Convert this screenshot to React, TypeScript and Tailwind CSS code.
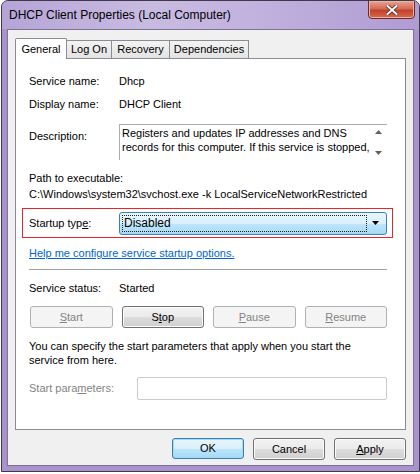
import React from 'react';

const font = "font-['Liberation_Sans',Arial,sans-serif]";

const Btn = ({ children, disabled, primary }: { children: React.ReactNode; disabled?: boolean; primary?: boolean }) => {
    if (disabled) {
        return (
            <div className="h-[22px] flex items-center justify-center rounded-[3px] border border-[#adb2b5] bg-[#f4f4f4] text-[#838383]">
                {children}
            </div>
        );
    }
    if (primary) {
        return (
            <div className="h-[21px] flex items-center justify-center rounded-[3px] border border-[#3c7fb1] bg-[linear-gradient(#eaf6fd,#d9f0fc_50%,#bee6fd_51%,#a7d9f5)] shadow-[inset_0_0_0_1px_#9fdbf8] text-black">
                {children}
            </div>
        );
    }
    return (
        <div className="h-[22px] flex items-center justify-center rounded-[3px] border border-[#707070] bg-[linear-gradient(#f2f2f2,#ebebeb_50%,#dddddd_51%,#cfcfcf)] shadow-[inset_0_0_0_1px_#fcfcfc] text-black">
            {children}
        </div>
    );
};

export default function App() {
    return (
        <div className={`w-[420px] h-[474px] bg-white ${font} text-[11px] text-black`}>
            {/* Window frame */}
            <div className="ml-[1px] w-[419px] h-[472px] flex flex-col rounded-t-[7px] border border-[#3e3a4a] bg-[#aa92cc] overflow-hidden">
                {/* Title bar */}
                <div className="h-[28px] flex items-start justify-between bg-[linear-gradient(90deg,#b5a4d6,#c8bbe2_35%,#c2b2de_60%,#b09bd3)]">
                    <div className="pl-[7px] pt-[7px] text-[12px] leading-[15px] text-black">DHCP Client Properties (Local Computer)</div>
                    <div className="mr-[4px] w-[47px] h-[19px] -mt-[1px] flex items-center justify-center rounded-b-[4px] border border-[#6b2a22] bg-[linear-gradient(#e8a494,#d46a55_45%,#c3422c_55%,#d66a4c)] shadow-[inset_0_0_0_1px_#eeb3a6]">
                        <svg width="12" height="10" viewBox="0 0 12 10">
                            <path d="M1.5 1 L10.5 9 M10.5 1 L1.5 9" stroke="#5a2a24" strokeWidth="3.6" strokeLinecap="square" />
                            <path d="M1.5 1 L10.5 9 M10.5 1 L1.5 9" stroke="#ffffff" strokeWidth="2" strokeLinecap="square" />
                        </svg>
                    </div>
                </div>

                {/* Client area */}
                <div className="mx-[5px] mb-[5px] flex-1 flex flex-col border border-[#7d7294] bg-[#f0f0f0] px-[7px] pt-[7px]">
                    {/* Tabs */}
                    <div className="flex items-end h-[21px] relative z-10">
                        <div className="h-[21px] w-[52px] flex items-start justify-center pt-[2px] border border-b-0 border-[#898c95] bg-white rounded-t-[2px] -mb-[1px] pb-[1px]">
                            General
                        </div>
                        <div className="h-[18px] w-[45px] flex items-center justify-center border border-l-0 border-b-0 border-[#898c95] bg-[linear-gradient(#f3f3f3,#e3e3e3)]">Log On</div>
                        <div className="h-[18px] w-[58px] flex items-center justify-center border border-l-0 border-b-0 border-[#898c95] bg-[linear-gradient(#f3f3f3,#e3e3e3)]">Recovery</div>
                        <div className="h-[18px] w-[79px] flex items-center justify-center border border-l-0 border-b-0 border-[#898c95] bg-[linear-gradient(#f3f3f3,#e3e3e3)]">Dependencies</div>
                    </div>

                    {/* Tab panel */}
                    <div className="h-[372px] border border-[#898c95] bg-white pl-[13px] pr-[18px] pt-[15px] flex flex-col">
                        <div className="flex leading-[15px]">
                            <div className="w-[90px]">Service name:</div>
                            <div>Dhcp</div>
                        </div>
                        <div className="flex leading-[15px] mt-[8px]">
                            <div className="w-[90px]">Display name:</div>
                            <div>DHCP Client</div>
                        </div>
                        <div className="flex mt-[12px]">
                            <div className="w-[90px] pt-[5px] leading-[15px]">Description:</div>
                            <div className="flex-1 h-[36px] flex border-t border-l border-[#abadb3]">
                                <div className="flex-1 pl-[2px] pt-[1px] leading-[14px]">
                                    Registers and updates IP addresses and DNS records for this computer. If this service is stopped,
                                </div>
                                <div className="w-[17px] flex flex-col items-center justify-between py-[5px]">
                                    <svg width="7" height="4" viewBox="0 0 7 4"><path d="M0 4 L3.5 0 L7 4 Z" fill="#606060" /></svg>
                                    <svg width="7" height="4" viewBox="0 0 7 4"><path d="M0 0 L3.5 4 L7 0 Z" fill="#606060" /></svg>
                                </div>
                            </div>
                        </div>
                        <div className="mt-[10px] leading-[16px]">Path to executable:</div>
                        <div className="leading-[16px]">C:\Windows\system32\svchost.exe -k LocalServiceNetworkRestricted</div>

                        {/* Startup type (highlighted) */}
                        <div className="mt-[6px] -ml-[7px] -mr-[6px] h-[30px] border border-[#e8262a] flex items-center pl-[6px] pr-[5px]">
                            <div className="w-[90px]">
                                Startup typ<span className="underline">e</span>:
                            </div>
                            <div className="flex-1 h-[23px] flex items-center rounded-[3px] border border-[#3c7fb1] bg-[linear-gradient(#eaf6fd,#d9f0fc_50%,#bee6fd_51%,#a7d9f5)] px-[2px]">
                                <div className="flex-1 h-[17px] border border-dotted border-[#202020] flex items-center pl-[1px] text-[12px]">
                                    Disabled
                                </div>
                                <div className="w-[17px] flex justify-center">
                                    <svg width="7" height="4" viewBox="0 0 7 4"><path d="M0 0 L3.5 4 L7 0 Z" fill="#000" /></svg>
                                </div>
                            </div>
                        </div>

                        <div className="mt-[8px] leading-[15px] text-[#0066cc] underline">Help me configure service startup options.</div>
                        <div className="mt-[8px] h-[2px] border-t border-[#a0a0a0] border-b border-b-white" />

                        <div className="flex leading-[15px] mt-[10px]">
                            <div className="w-[90px]">Service status:</div>
                            <div>Started</div>
                        </div>

                        <div className="mt-[10px] grid grid-cols-4 gap-[9px] pl-[1px]">
                            <Btn disabled><span className="underline">S</span>tart</Btn>
                            <Btn>S<span className="underline">t</span>op</Btn>
                            <Btn disabled><span className="underline">P</span>ause</Btn>
                            <Btn disabled><span className="underline">R</span>esume</Btn>
                        </div>

                        <div className="mt-[11px] leading-[14px]">
                            You can specify the start parameters that apply when you start the service from here.
                        </div>

                        <div className="mt-[10px] flex items-center">
                            <div className="w-[108px] text-[#838383]">
                                Start para<span className="underline">m</span>eters:
                            </div>
                            <div className="flex-1 h-[23px] border border-[#c9cbd0] rounded-[2px] bg-white" />
                        </div>
                    </div>

                    {/* Dialog buttons */}
                    <div className="mt-[8px] flex justify-end gap-[9px]">
                        <div className="w-[72px]"><Btn primary>OK</Btn></div>
                        <div className="w-[72px]"><Btn>Cancel</Btn></div>
                        <div className="w-[72px]"><Btn><span className="underline">A</span>pply</Btn></div>
                    </div>
                </div>
            </div>
        </div>
    );
}
